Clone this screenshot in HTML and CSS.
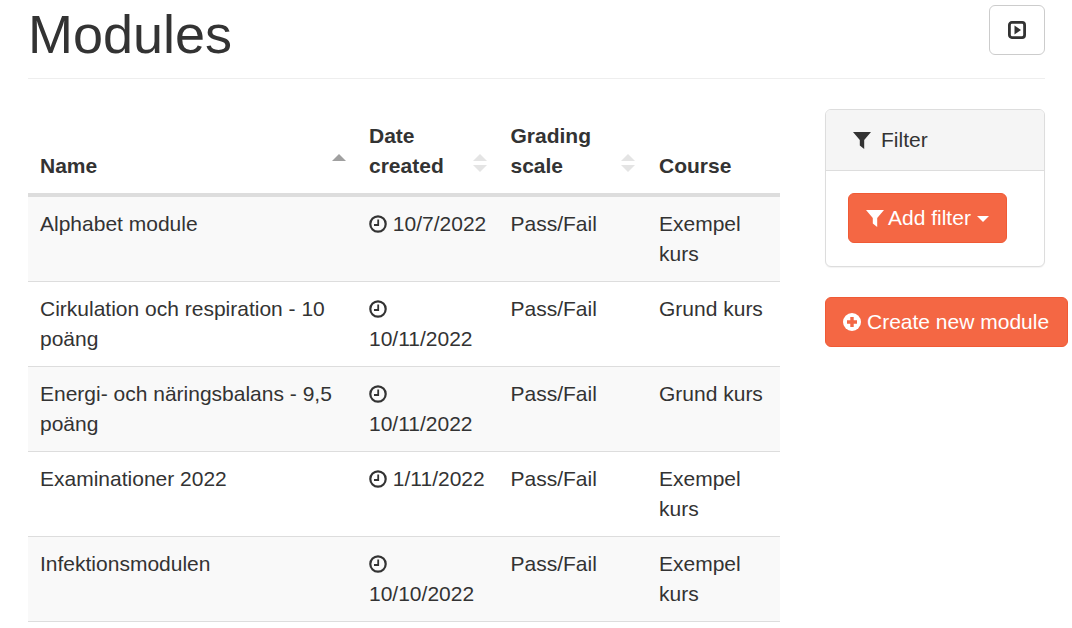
FILE: index.html
```html
<!DOCTYPE html>
<html lang="en-US">
<head>
   <meta charset="UTF-8">
   <meta name="viewport" content="width=device-width, initial-scale=1.0">
   <title>Modules</title>
   <link rel="stylesheet" href="styles.css">
</head>
<body>
   <svg class="defs" width="0" height="0">
      <symbol id="i-clock" viewBox="0 0 18 18">
         <circle cx="9" cy="9" r="7.7" fill="none" stroke="currentColor" stroke-width="2.2"/>
         <path d="M9.2 4.4V10H5" fill="none" stroke="currentColor" stroke-width="1.8"/>
      </symbol>
      <symbol id="i-filter" viewBox="0 0 18 18">
         <path d="M0 1H18L11.2 9V18L6.8 14.5V9Z" fill="currentColor"/>
      </symbol>
   </svg>
   <div class="page">
      <header class="page-header">
         <h1>Modules</h1>
         <button class="tour-btn" aria-label="Play">
            <svg width="18" height="18" viewBox="0 0 18 18">
               <rect x="1.4" y="1.4" width="15.2" height="15.2" rx="2.5" fill="none" stroke="#333" stroke-width="2.8"/>
               <path d="M6.5 4.5L13 9L6.5 13.5Z" fill="#333"/>
            </svg>
         </button>
      </header>
      <div class="content">
         <table class="modules">
            <thead>
               <tr>
                  <th class="col-name sort-cell">Name<span class="sort sort-asc"></span></th>
                  <th class="col-date sort-cell">Date created<span class="sort"></span></th>
                  <th class="col-scale sort-cell">Grading scale<span class="sort"></span></th>
                  <th class="col-course">Course</th>
               </tr>
            </thead>
            <tbody>
               <tr>
                  <td>Alphabet module</td>
                  <td><svg class="clock"><use href="#i-clock"/></svg> 10/7/2022</td>
                  <td>Pass/Fail</td>
                  <td>Exempel kurs</td>
               </tr>
               <tr>
                  <td>Cirkulation och respiration - 10 poäng</td>
                  <td><svg class="clock"><use href="#i-clock"/></svg> 10/11/2022</td>
                  <td>Pass/Fail</td>
                  <td>Grund kurs</td>
               </tr>
               <tr>
                  <td>Energi- och näringsbalans - 9,5 poäng</td>
                  <td><svg class="clock"><use href="#i-clock"/></svg> 10/11/2022</td>
                  <td>Pass/Fail</td>
                  <td>Grund kurs</td>
               </tr>
               <tr>
                  <td>Examinationer 2022</td>
                  <td><svg class="clock"><use href="#i-clock"/></svg> 1/11/2022</td>
                  <td>Pass/Fail</td>
                  <td>Exempel kurs</td>
               </tr>
               <tr>
                  <td>Infektionsmodulen</td>
                  <td><svg class="clock"><use href="#i-clock"/></svg> 10/10/2022</td>
                  <td>Pass/Fail</td>
                  <td>Exempel kurs</td>
               </tr>
            </tbody>
         </table>
         <aside class="side">
            <div class="panel">
               <div class="panel-heading">
                  <svg class="icon"><use href="#i-filter"/></svg>
                  <span>Filter</span>
               </div>
               <div class="panel-body">
                  <button class="btn">
                     <svg class="icon"><use href="#i-filter"/></svg>
                     <span>Add filter</span>
                     <span class="caret"></span>
                  </button>
               </div>
            </div>
            <button class="btn btn-create">
               <svg class="icon" viewBox="0 0 18 18">
                  <circle cx="9" cy="9" r="9" fill="currentColor"/>
                  <path d="M9 4V14M4 9H14" stroke="#f46744" stroke-width="3.4"/>
               </svg>
               <span>Create new module</span>
            </button>
         </aside>
      </div>
   </div>
</body>
</html>
```

FILE: styles.css
```css
* {
   box-sizing: border-box;
}
body {
   margin: 0;
   background: #fff;
   color: #333;
   font-family: "Liberation Sans", Arial, sans-serif;
   font-size: 21px;
   line-height: 30px;
}
.defs {
   position: absolute;
}
.page {
   padding: 0 27px 0 28px;
}
.page-header {
   display: flex;
   justify-content: space-between;
   align-items: flex-start;
   height: 79px;
   padding-top: 5px;
   border-bottom: 1px solid #eee;
}
h1 {
   margin: 0;
   font-size: 54px;
   font-weight: 400;
   line-height: 59px;
}
.tour-btn {
   display: flex;
   align-items: center;
   justify-content: center;
   width: 56px;
   height: 50px;
   padding: 0;
   background: #fff;
   border: 1px solid #ccc;
   border-radius: 6px;
}
.content {
   display: flex;
   align-items: flex-start;
   gap: 45px;
   margin-top: 30px;
}
.modules {
   width: 752px;
   flex: none;
   border-collapse: collapse;
   table-layout: fixed;
}
th, td {
   padding: 12px;
   text-align: left;
   vertical-align: top;
}
th {
   vertical-align: bottom;
   font-weight: 700;
   border-bottom: 4px solid #ddd;
}
td {
   border-bottom: 1px solid #ddd;
}
tbody tr:nth-child(odd) {
   background: #f9f9f9;
}
.col-name {
   width: 329px;
}
.col-date {
   width: 141.5px;
}
.col-scale {
   width: 148.5px;
}
.sort-cell {
   position: relative;
   padding-right: 36px;
}
.sort {
   position: absolute;
   right: 12px;
   bottom: 21px;
   width: 14px;
   height: 18px;
}
.sort::before, .sort::after {
   content: "";
   position: absolute;
   left: 0;
   border-left: 7px solid transparent;
   border-right: 7px solid transparent;
}
.sort::before {
   top: 0;
   border-bottom: 7px solid #e4e4e4;
}
.sort::after {
   bottom: 0;
   border-top: 7px solid #e4e4e4;
}
.sort-asc {
   right: 11px;
}
.sort-asc::before {
   border-bottom-color: #a0a0a0;
}
.sort-asc::after {
   display: none;
}
.clock {
   width: 18px;
   height: 18px;
   vertical-align: -2px;
}
.side {
   width: 220px;
   flex: none;
}
.panel {
   background: #fff;
   border: 1px solid #ddd;
   border-radius: 6px;
   box-shadow: 0 1px 1px rgba(0, 0, 0, .05);
}
.panel-heading {
   display: flex;
   align-items: center;
   gap: 10px;
   height: 61px;
   padding: 0 27px;
   background: #f5f5f5;
   border-bottom: 1px solid #ddd;
   border-radius: 5px 5px 0 0;
}
.panel-body {
   height: 95px;
   padding: 22px;
}
.icon {
   width: 18px;
   height: 18px;
   flex: none;
}
.btn {
   display: inline-flex;
   align-items: center;
   gap: 4px;
   height: 50px;
   padding: 0 17px;
   color: #fff;
   background: #f46744;
   border: 1px solid #f05a35;
   border-radius: 6px;
   font: inherit;
   white-space: nowrap;
}
.caret {
   margin-left: 2px;
   margin-top: 2px;
   border-top: 6px solid #fff;
   border-left: 6px solid transparent;
   border-right: 6px solid transparent;
}
.btn-create {
   width: 243px;
   margin-top: 30px;
   gap: 6px;
}
```
